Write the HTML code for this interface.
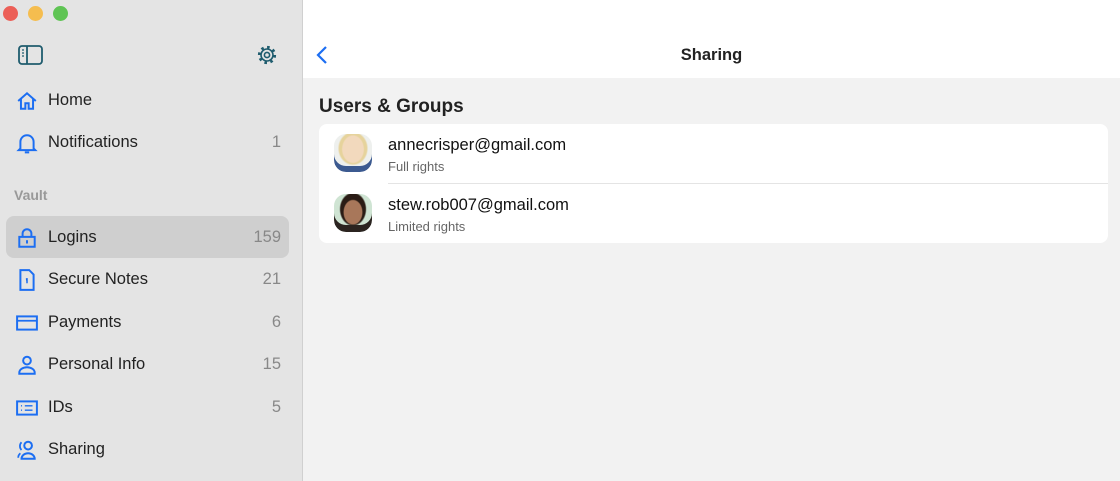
<!DOCTYPE html>
<html><head><style>
body{margin:0;width:1120px;height:481px;overflow:hidden;font-family:"Liberation Sans",sans-serif;position:relative;background:#f2f2f2}
.side{position:absolute;left:0;top:0;width:302px;height:481px;background:#e4e4e4;border-right:1px solid #d0d0d0}
.dot{position:absolute;top:6px;width:15px;height:15px;border-radius:50%}
.item{position:absolute;left:6px;width:283px;height:42px;border-radius:8px}
.item span.t{position:absolute;left:42px;top:12px;font-size:16.5px;color:#222}
.item span.c{position:absolute;right:8px;top:12px;font-size:16.5px;color:#888}
.item svg{position:absolute;left:10px;top:11px}
.main{position:absolute;left:303px;top:0;right:0;bottom:0}
.top{height:78px;background:#fff}
.card{position:absolute;left:16px;top:124px;width:789px;height:119px;background:#fff;border-radius:8px}
.av{position:absolute;left:15px;width:38px;height:38px;border-radius:12px}
.em{position:absolute;left:69px;font-size:16.5px;color:#111}
.sub{position:absolute;left:69px;font-size:13px;color:#666}
</style></head><body>
<div class="side">
<div class="dot" style="left:3px;background:#ec5f57"></div>
<div class="dot" style="left:28px;background:#f5bd4f"></div>
<div class="dot" style="left:53px;background:#5fc454"></div>
<svg style="position:absolute;left:18px;top:45px" width="25" height="20" viewBox="0 0 25 20"><rect x="1" y="1" width="23" height="18" rx="3" fill="none" stroke="#1f5c6e" stroke-width="1.8"/><line x1="9" y1="1" x2="9" y2="19" stroke="#1f5c6e" stroke-width="1.8"/><path d="M4 5h2M4 8h2M4 11h2" stroke="#1f5c6e" stroke-width="1.2"/></svg>
<svg style="position:absolute;left:256px;top:44px" width="22" height="22" viewBox="0 0 22 22"><circle cx="11" cy="11" r="7.8" fill="none" stroke="#1f5c6e" stroke-width="2.6" stroke-dasharray="2.6 3.5"/><circle cx="11" cy="11" r="6" fill="none" stroke="#1f5c6e" stroke-width="1.6"/><circle cx="11" cy="11" r="2.6" fill="none" stroke="#1f5c6e" stroke-width="1.6"/></svg>
<div class="item" style="top:79px"><svg width="22" height="22" viewBox="0 0 20 20"><path d="M2 10L10 3l8 7M4.5 8v9h4v-5h3v5h4V8" fill="none" stroke="#1c6ef2" stroke-width="1.8"/></svg><span class="t">Home</span></div>
<div class="item" style="top:121px"><svg width="22" height="22" viewBox="0 0 20 20"><path d="M4 15V9a6 6 0 0112 0v6l1.5 1.5h-15zM8 18.5h4" fill="none" stroke="#1c6ef2" stroke-width="1.8"/></svg><span class="t">Notifications</span><span class="c">1</span></div>
<div style="position:absolute;left:14px;top:187px;font-size:14px;color:#999;font-weight:bold">Vault</div>
<div class="item" style="top:216px;background:#cfcfcf"><svg width="22" height="22" viewBox="0 0 20 20"><path d="M6 9V6a4 4 0 018 0v3M3 9h14v9H3z" fill="none" stroke="#1c6ef2" stroke-width="1.8"/><path d="M10 12v3" stroke="#1c6ef2" stroke-width="1.8"/></svg><span class="t">Logins</span><span class="c">159</span></div>
<div class="item" style="top:258px"><svg width="22" height="22" viewBox="0 0 20 20"><path d="M4 1h8l4 4v14H4z" fill="none" stroke="#1c6ef2" stroke-width="1.8"/><path d="M9 9h1v4" stroke="#1c6ef2" stroke-width="1.4"/></svg><span class="t">Secure Notes</span><span class="c">21</span></div>
<div class="item" style="top:301px"><svg width="22" height="22" viewBox="0 0 20 20"><rect x="1" y="4" width="18" height="12" fill="none" stroke="#1c6ef2" stroke-width="1.8"/><line x1="1" y1="8" x2="19" y2="8" stroke="#1c6ef2" stroke-width="1.6"/></svg><span class="t">Payments</span><span class="c">6</span></div>
<div class="item" style="top:343px"><svg width="22" height="22" viewBox="0 0 20 20"><circle cx="10" cy="6" r="3.5" fill="none" stroke="#1c6ef2" stroke-width="1.8"/><path d="M3 18v-1a7 5 0 0114 0v1z" fill="none" stroke="#1c6ef2" stroke-width="1.8"/></svg><span class="t">Personal Info</span><span class="c">15</span></div>
<div class="item" style="top:386px"><svg width="22" height="22" viewBox="0 0 20 20"><rect x="1" y="4" width="18" height="12" fill="none" stroke="#1c6ef2" stroke-width="1.8"/><path d="M4.5 8h1M4.5 12h1M8 8h7M8 12h7" stroke="#1c6ef2" stroke-width="1.3"/></svg><span class="t">IDs</span><span class="c">5</span></div>
<div class="item" style="top:428px"><svg width="22" height="22" viewBox="0 0 20 20"><circle cx="11" cy="6" r="3.5" fill="none" stroke="#1c6ef2" stroke-width="1.8"/><path d="M5 18a6 5 0 0112 0z" fill="none" stroke="#1c6ef2" stroke-width="1.8"/><path d="M5 3a5 5 0 000 7M2 17a5 5 0 012-4" fill="none" stroke="#1c6ef2" stroke-width="1.6"/></svg><span class="t">Sharing</span></div>
</div>
<div class="main">
<div class="top"><svg style="position:absolute;left:13px;top:45px" width="12" height="20" viewBox="0 0 12 20"><path d="M10 2L2 10l8 8" fill="none" stroke="#1c6ef2" stroke-width="2.2"/></svg>
<div style="position:absolute;left:0;right:0;top:46px;text-align:center;font-size:16.5px;font-weight:bold;color:#222">Sharing</div></div>
<div style="position:absolute;left:16px;top:96px;font-size:19px;font-weight:bold;color:#222">Users &amp; Groups</div>
<div class="card">
<div class="av" style="top:10px;background:radial-gradient(ellipse 30% 38% at 50% 40%,#f2d9bd 0 90%,transparent 100%),radial-gradient(ellipse 40% 45% at 50% 38%,#e6d39c 0 90%,#eef0ee 100%);box-shadow:inset 0 -6px 0 #3c5a90"></div>
<div class="em" style="top:12px">annecrisper@gmail.com</div><div class="sub" style="top:35px">Full rights</div>
<div style="position:absolute;left:69px;right:0;top:59px;height:1px;background:#e4e4e4"></div>
<div class="av" style="top:70px;background:radial-gradient(ellipse 26% 34% at 50% 48%,#a8775a 0 90%,transparent 100%),radial-gradient(ellipse 36% 45% at 50% 40%,#2a1c15 0 90%,#cfe4d3 100%);box-shadow:inset 0 -7px 0 #2b2420"></div>
<div class="em" style="top:72px">stew.rob007@gmail.com</div><div class="sub" style="top:95px">Limited rights</div>
</div>
</div>
</body></html>
